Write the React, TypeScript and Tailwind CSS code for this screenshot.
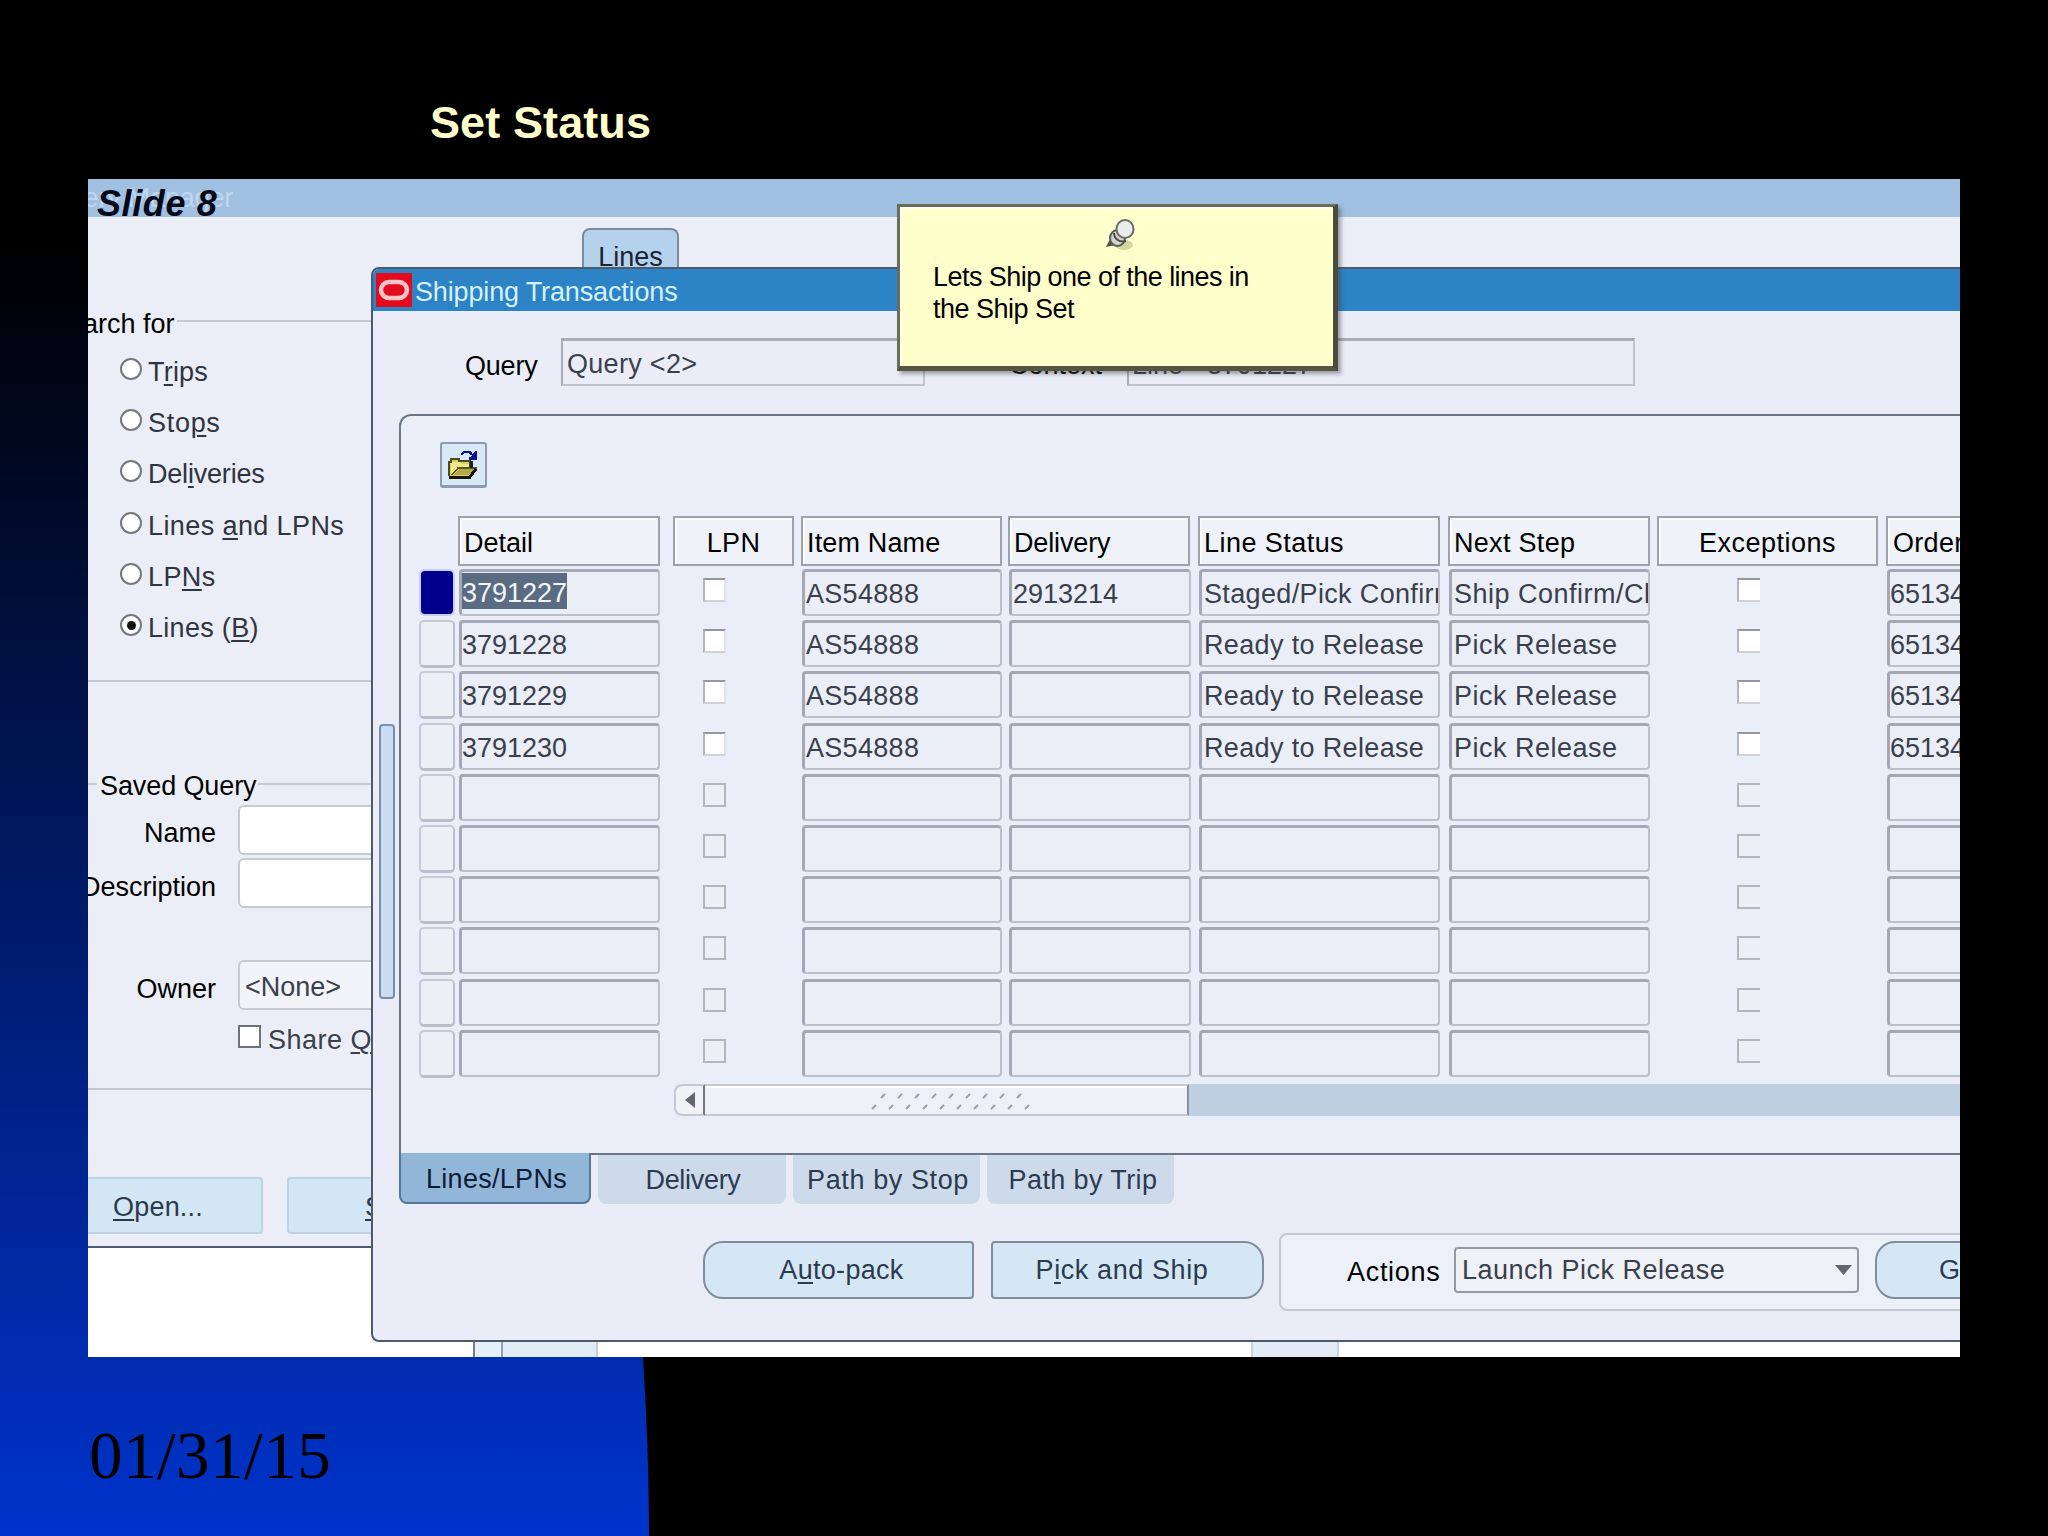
import React from 'react';
import clsx from 'clsx';

interface Column {
  title: string;
  // padding and right gap of the header box
  header: string;
  cell: string;
  kind: 'text' | 'lpn' | 'exception';
}

const columns: Column[] = [
  { title: 'Detail', header: 'mr-[13px] pl-[4px]', cell: 'ml-[1px] mr-[13px] pl-[0px]', kind: 'text' },
  { title: 'LPN', header: 'mr-[7px] justify-center tracking-[0.3px]', cell: '', kind: 'lpn' },
  { title: 'Item Name', header: 'mr-[6px] pl-[4px] tracking-[0.15px]', cell: 'ml-[1px] mr-[6px] pl-[1px] tracking-[0.3px]', kind: 'text' },
  { title: 'Delivery', header: 'mr-[8px] pl-[4px] tracking-[-0.15px]', cell: 'ml-[1px] mr-[7px] pl-[1px]', kind: 'text' },
  { title: 'Line Status', header: 'mr-[8px] pl-[4px] tracking-[0.45px]', cell: 'ml-[1px] mr-[8px] pl-[2px] tracking-[0.35px]', kind: 'text' },
  { title: 'Next Step', header: 'mr-[7px] pl-[4px] tracking-[0.3px]', cell: 'ml-[1px] mr-[7px] pl-[2px] tracking-[0.5px]', kind: 'text' },
  { title: 'Exceptions', header: 'mr-[8px] justify-center tracking-[0.5px]', cell: '', kind: 'exception' },
  { title: 'Order', header: 'pl-[5px] tracking-[0.3px]', cell: 'ml-[1px] pl-[0px]', kind: 'text' },
];

const lines: string[][] = [
  ['3791227', '', 'AS54888', '2913214', 'Staged/Pick Confirmed', 'Ship Confirm/Cl', '', '65134'],
  ['3791228', '', 'AS54888', '', 'Ready to Release', 'Pick Release', '', '65134'],
  ['3791229', '', 'AS54888', '', 'Ready to Release', 'Pick Release', '', '65134'],
  ['3791230', '', 'AS54888', '', 'Ready to Release', 'Pick Release', '', '65134'],
  [], [], [], [], [], [],
];

const grid = 'grid grid-cols-[39px_215px_128px_207px_190px_250px_209px_229px_150px]';

// Label with a mnemonic: "T_rips" underlines the r
const Mnemonic: React.FC<{ text: string }> = ({ text }) => {
  const [before, rest] = text.split('_');
  return (
    <span>
      {before}
      <span className="underline decoration-2 underline-offset-[3px]">{rest[0]}</span>
      {rest.slice(1)}
    </span>
  );
};

const OracleIcon = () => (
  <svg width="36" height="34" viewBox="0 0 36 34">
    <rect width="36" height="34" fill="#e20a1c" />
    <rect x="5" y="9" width="26" height="16" rx="8" fill="none" stroke="#ffc4c8" strokeWidth="4.500" />
  </svg>
);

const FolderIcon = () => (
  <svg width="30" height="30" viewBox="0 0 30 30" shapeRendering="crispEdges">
    <path d="M1 12h2v-3h8v2h11v6h6v2l-5 8H1z" fill="#d8cf6a" />
    <path d="M3 12h8l2 2h8v3H11l-8 7z" fill="#efe98c" />
    <path d="M6 24l5-5h15l-4 6H6z" fill="#b5a94c" />
    <path d="M1 26V12h2V9h8v2h11v6" fill="none" stroke="#4c4a1c" strokeWidth="2" />
    <path d="M4 25l6-7h18l-5 8" fill="none" stroke="#5c5822" strokeWidth="1.500" />
    <path d="M1 27h21l6-8" fill="none" stroke="#16160a" strokeWidth="3" />
    <path d="M23 11v7" stroke="#1d1d30" strokeWidth="3" />
    <path d="M13 5l3-3h6l2 3" fill="none" stroke="#0b0b8c" strokeWidth="2.500" />
    <path d="M29 1v9h-8V7l3-1 3-5z" fill="#0b0b9c" />
  </svg>
);

const PinIcon = () => (
  <svg width="30" height="33" viewBox="0 0 30 33">
    <ellipse cx="18" cy="26" rx="9" ry="5" fill="#d6d69c" />
    <path d="M0 28l4-8 6 6z" fill="#55553c" />
    <ellipse cx="11.500" cy="19" rx="7.500" ry="8" fill="#d2d2ce" stroke="#5a5a56" strokeWidth="2" />
    <path d="M8 14c0 6 6 10 12 8" fill="none" stroke="#4b4b48" strokeWidth="2" />
    <ellipse cx="19" cy="10" rx="8.500" ry="9" fill="#ececec" stroke="#6a6a67" strokeWidth="2" />
  </svg>
);

const Radio: React.FC<{ label: string; checked?: boolean; className?: string }> = ({ label, checked, className }) => (
  <div className="flex h-[51.200px] items-center pl-8 text-[#30343f]">
    <span className="mb-[5px] mr-[6px] flex h-[22px] w-[22px] items-center justify-center rounded-full border-2 border-[#74777c] bg-white">
      {checked && <span className="h-[9px] w-[9px] rounded-full bg-[#111]" />}
    </span>
    <span className={clsx('pt-[1px]', className)}>
      <Mnemonic text={label} />
    </span>
  </div>
);

const FieldLabel: React.FC<{ children: React.ReactNode; className?: string }> = ({ children, className }) => (
  <span className={clsx('mr-[22px] flex w-[128px] shrink-0 justify-end', className)}>{children}</span>
);

const ManagerWindow = () => (
  <div className="flex h-[1069px] flex-col border-b-2 border-[#4d5a6b] bg-[#ebeef7]">
    <div className="relative h-[38px] shrink-0 bg-[#9fc0e0]">
      <span className="absolute -left-10 top-0 leading-[38px] tracking-[-0.2px] text-[#bfd8ee]">Query Manager</span>
      <span className="absolute left-[9px] top-[4px] text-[36px] font-bold italic leading-[42px] tracking-[0.6px] text-[#040818]">Slide 8</span>
    </div>
    <div className="ml-[494px] mt-[11px] flex h-[40px] w-[97px] shrink-0 items-start justify-center rounded-t-lg border-2 border-b-0 border-[#7c8b9c] bg-[#b5d2ec] pt-[11px] text-[#1b2434]">
      Lines
    </div>

    <div className="flex w-[300px] flex-col">
      <div className="mt-10 flex h-8 items-center">
        <span className="-ml-[38px]">Search for</span>
        <span className="-mt-[7px] ml-[2px] h-[2px] flex-1 bg-[#c3c8d4]" />
      </div>
      <div className="mt-[6px]">
        <Radio label="T_rips" className="tracking-[0.2px]" />
        <Radio label="Sto_ps" className="tracking-[0.7px]" />
        <Radio label="Del_iveries" className="tracking-[-0.2px]" />
        <Radio label="Lines _and LPNs" className="tracking-[0.4px]" />
        <Radio label="LP_Ns" className="tracking-[0.4px]" />
        <Radio label="Lines (_B)" checked className="tracking-[0.3px]" />
      </div>
      <div className="mt-[27px] h-[2px] bg-[#c0c8d4]" />

      <div className="mt-[88px] flex h-8 items-center">
        <span className="mr-[3px] -mt-[5px] h-[2px] w-[9px] bg-[#c3c8d4]" />
        <span className="tracking-[-0.1px]">Saved Query</span>
        <span className="-mt-[5px] ml-[2px] h-[2px] flex-1 bg-[#c3c8d4]" />
      </div>
      <div className="mt-[3px] flex h-[50px] items-center">
        <FieldLabel className="pt-[6px]">Name</FieldLabel>
        <div className="h-full flex-1 rounded-l-md border-2 border-[#c6cad2] bg-white" />
      </div>
      <div className="mt-[3px] flex h-[50px] items-center">
        <FieldLabel className="pt-[7px]">Description</FieldLabel>
        <div className="h-full flex-1 rounded-l-md border-2 border-[#c6cad2] bg-white" />
      </div>
      <div className="mt-[52px] flex h-[50px] items-center">
        <FieldLabel className="pt-[7px]">Owner</FieldLabel>
        <div className="flex h-full flex-1 items-center rounded-l-md border-2 border-[#c6cad2] bg-[#f2f4fa] pl-[5px] pt-[3px] text-[#3a3f4c]">
          &lt;None&gt;
        </div>
      </div>
      <div className="ml-[150px] mt-[14px] flex h-6 items-center whitespace-nowrap">
        <span className="h-[23px] w-[23px] shrink-0 border-2 border-[#6f7278] bg-white" />
        <span className="ml-[7px] mt-[7px] tracking-[0.5px] text-[#3a3f4c]">
          <Mnemonic text="Share _Q" />
        </span>
      </div>
      <div className="mt-[40px] h-[2px] bg-[#c0c8d4]" />
      <div className="mt-[87px] flex h-[57px]">
        <div className="flex w-[175px] shrink-0 items-center rounded-r border-2 border-l-0 border-[#bdd2e2] bg-[#d3e6f4] pl-[25px] pt-[2px] tracking-[0.2px] text-[#2c3a4c]">
          <Mnemonic text="_Open..." />
        </div>
        <div className="ml-[24px] flex w-[170px] shrink-0 items-center rounded-l border-2 border-[#bdd2e2] bg-[#d3e6f4] pl-[76px] pt-[2px] text-[#2c3a4c]">
          <Mnemonic text="_Save" />
        </div>
      </div>
    </div>
  </div>
);

const CheckCell: React.FC<{ filled: boolean; open?: boolean }> = ({ filled, open }) => (
  <div className={clsx('pt-[9px]', open ? 'pl-[80px]' : 'pl-[30px]')}>
    <span
      className={clsx(
        'block h-[24px] w-[23px] border-2 border-[#b3b6bf]',
        open && 'border-r-0',
        filled ? 'border-b-[#cfd2d8] border-r-[#dfe2e8] border-t-[#94979f] bg-white' : 'bg-[#edeff7]',
      )}
    />
  </div>
);

const LinesTable = () => (
  <div className="ml-[18px] mt-7 w-[1620px]">
    <div className={clsx(grid, 'h-[50px]')}>
      <span />
      {columns.map((col) => (
        <div
          key={col.title}
          className={clsx('flex items-center border-2 border-[#9ea2ab] bg-[#eff2f9] pt-[4px] text-black shadow-[inset_2px_2px_0_#fbfcff]', col.header)}
        >
          {col.title}
        </div>
      ))}
    </div>
    <div className="mt-[3px]">
      {lines.map((line, i) => (
        <div key={i} className={clsx(grid, 'h-[51.200px]')}>
          {i === 0 ? (
            <div className="ml-[2px] mt-[2px] h-[43px] w-[32px] rounded-[4px] bg-[#00008c] shadow-[0_0_0_2px_#c9ccf5]" />
          ) : (
            <div className="h-[48px] w-[36px] rounded-[5px] border-2 border-[#c6cad4] border-b-[3px] border-b-[#b9becb] border-r-[#b9becb] bg-[#ebeff6]" />
          )}
          {columns.map((col, c) =>
            col.kind === 'text' ? (
              <div
                key={col.title}
                className={clsx(
                  'h-[47px] overflow-hidden whitespace-nowrap rounded-[4px] border-2 border-[#bcc0cb] border-l-[3px] border-l-[#a4a8b4] border-t-[3px] border-t-[#a4a8b4] bg-[#e9eef7] leading-[44px] text-[#3a3f4c]',
                  col.cell,
                )}
              >
                {i === 0 && c === 0 ? (
                  <span className="mt-[1px] inline-block h-9 bg-[#5a6b82] align-top leading-[41px] text-[#f0f5fc]">{line[c]}</span>
                ) : (
                  line[c]
                )}
              </div>
            ) : (
              <CheckCell key={col.title} filled={line.length > 0} open={col.kind === 'exception'} />
            ),
          )}
        </div>
      ))}
    </div>
  </div>
);

const HorizontalScroll = () => (
  <div className="ml-[273px] mt-[3px] flex h-8">
    <div className="flex w-[31px] items-center justify-end rounded-l-lg border-2 border-[#c5c8d2] border-r-[#73777f] bg-[#f0f2f8] pr-[8px]">
      <svg width="10" height="16" viewBox="0 0 10 16">
        <path d="M10 0v16L0 8z" fill="#62666f" />
      </svg>
    </div>
    <div className="w-[484px] border-y-2 border-r-2 border-[#c5c8d2] border-r-[#8b919c] bg-[#eef0f8] shadow-[inset_0_2px_0_#fff]">
      <svg width="480" height="28" viewBox="0 0 480 28">
        {Array.from({ length: 9 }, (_, i) => (
          <path key={i} d={`M${176 + i * 17} 12l4-4`} stroke="#9a9eaa" strokeWidth="2" />
        ))}
        {Array.from({ length: 10 }, (_, i) => (
          <path key={i} d={`M${167 + i * 17} 23l4-4`} stroke="#9a9eaa" strokeWidth="2" />
        ))}
      </svg>
    </div>
    <div className="flex-1 bg-[#c0d0e3]" />
  </div>
);

const ShippingWindow = () => (
  <div className="absolute left-[283px] top-[88px] h-[1075px] w-[1700px] rounded-l-lg border-2 border-[#4d5a6b] bg-[#eaedf7]">
    <div className="flex h-[42px] items-center rounded-tl-md bg-[#2c83c6] pl-[3px] tracking-[-0.15px] text-[#d5f1fd]">
      <OracleIcon />
      <span className="ml-[3px] pt-[3px]">Shipping Transactions</span>
    </div>

    <div className="mt-[27px] flex h-[48px] items-center pl-[92px] text-black">
      <span className="w-[96px] pt-[8px] tracking-[-0.2px]">Query</span>
      <div className="flex h-full w-[364px] items-center border-2 border-t-[3px] border-[#c0c2ce] border-l-[#a9acb8] border-t-[#a9acb8] pl-[4px] pt-[2px] tracking-[0.3px] text-[#3a3f4c]">
        Query &lt;2&gt;
      </div>
      <span className="ml-[84px] w-[118px] pt-[6px]">Context</span>
      <div className="flex h-full w-[508px] items-center border-2 border-t-[3px] border-[#c0c2ce] border-l-[#a9acb8] border-t-[#a9acb8] pl-[3px] pt-[5px] text-[#3a3f4c]">
        Line - 3791227
      </div>
    </div>

    <div className="mt-[28px] flex h-[741px]">
      <div className="w-[26px] shrink-0 pl-[6px] pt-[310px]">
        <div className="h-[275px] w-[16px] rounded-[4px] border-2 border-[#7b8ea8] bg-[#c9dcf3]" />
      </div>
      <div className="flex-1 rounded-tl-[12px] border-2 border-r-0 border-[#6d7686] bg-[#e9eef8]">
        <div className="ml-[39px] mt-[26px] flex h-[46px] w-[47px] items-center justify-center rounded-[3px] border-2 border-b-[3px] border-[#8d9bb0] bg-[#d7e8f6] pr-[2px]">
          <FolderIcon />
        </div>
        <LinesTable />
        <HorizontalScroll />
      </div>
    </div>

    <div className="flex h-[49px] gap-[7px] pl-[26px] text-[#2c3a50]">
      <div className="-mt-[2px] flex h-[51px] w-[192px] items-center justify-center rounded-b-lg border-2 border-t-0 border-[#56779a] bg-[#91b6d8] pl-[3px] pt-[2px] tracking-[0.3px] text-[#0f1c38]">
        Lines/LPNs
      </div>
      <div className="flex w-[188px] items-center justify-center rounded-b-lg bg-[#cddaea] pl-[2px] tracking-[-0.3px]">Delivery</div>
      <div className="flex w-[187px] items-center justify-center rounded-b-lg bg-[#cddaea] pl-[3px] tracking-[0.6px]">Path by Stop</div>
      <div className="flex w-[187px] items-center justify-center rounded-b-lg bg-[#cddaea] pl-[5px] tracking-[0.4px]">Path by Trip</div>
    </div>

    <div className="mt-[29px] flex h-[78px] pl-[330px] text-[#2c3a50]">
      <div className="mt-[8px] flex h-[58px] w-[271px] items-center justify-center rounded-l-[20px] rounded-r-[4px] border-2 border-[#7f8e9e] bg-[#d5e7f4] pl-[6px] tracking-[0.3px]">
        <Mnemonic text="A_uto-pack" />
      </div>
      <div className="ml-[17px] mt-[8px] flex h-[58px] w-[273px] items-center justify-center rounded-l-[4px] rounded-r-[20px] border-2 border-[#7f8e9e] bg-[#d5e7f4] pr-[11px] tracking-[0.6px]">
        <Mnemonic text="P_ick and Ship" />
      </div>
      <div className="ml-[15px] flex flex-1 items-start rounded-l-lg border-2 border-[#c3c7d2] bg-[#ecf0f8]">
        <span className="ml-[66px] mt-[21px] w-[107px] tracking-[0.7px] text-black">Actions</span>
        <div className="mt-[12px] flex h-[46px] w-[405px] items-center justify-between rounded-[4px] border-2 border-[#94989f] bg-[#eef1f5] pl-[6px] pr-[5px] tracking-[0.5px] text-[#3a3f4c]">
          Launch Pick Release
          <svg width="17" height="10" viewBox="0 0 17 10">
            <path d="M0 0h17L8.500 10z" fill="#62666f" />
          </svg>
        </div>
        <div className="ml-[16px] mt-[6px] flex h-[58px] w-[150px] items-center rounded-l-[20px] border-2 border-[#7f8e9e] bg-[#d5e7f4] pl-[62px]">Go</div>
      </div>
    </div>
  </div>
);

const StickyNote = () => (
  <div className="absolute left-[809px] top-[25px] h-[167px] w-[441px] border-b-[5px] border-l-[3px] border-r-[5px] border-t-[3px] border-[#6c6d58] border-b-[#55563f] border-r-[#4a4b3a] bg-[#ffffcc] text-black shadow-[3px_3px_4px_rgba(60,60,70,0.45),inset_2px_2px_0_#fffff0]">
    <div className="ml-[206px] mt-[12px] h-[33px]">
      <PinIcon />
    </div>
    <p className="ml-[33px] mt-[9px] leading-8 tracking-[-0.55px]">
      Lets Ship one of the lines in
      <br />
      <span className="tracking-[-0.5px]">the Ship Set</span>
    </p>
  </div>
);

export default function App() {
  return (
    <div className="relative h-[1536px] w-[2048px] overflow-hidden bg-black font-['Liberation_Sans',Arial,sans-serif] text-[27px] leading-8 text-black">
      <svg className="absolute left-0 top-0" width="700" height="1536" viewBox="0 0 700 1536">
        <defs>
          <linearGradient id="glow" gradientUnits="userSpaceOnUse" x1="0" y1="0" x2="0" y2="1536">
            <stop offset="0" stopColor="#000000" />
            <stop offset="0.16" stopColor="#000000" />
            <stop offset="1" stopColor="#0033cc" />
          </linearGradient>
        </defs>
        <path d="M0 0H200C480 500 640 1000 643 1357Q649 1450 649 1536H0Z" fill="url(#glow)" />
      </svg>

      <div className="relative flex h-full flex-col">
        <h1 className="ml-[430px] mt-[97px] text-[45px] font-bold leading-[52px] tracking-[0.1px] text-[#ffffcc]">Set Status</h1>
        <div className="relative ml-[88px] mt-[30px] h-[1178px] w-[1872px] shrink-0 overflow-hidden bg-white">
          <ManagerWindow />
          {/* windows peeking out below the form */}
          <div className="ml-[385px] flex h-[109px]">
            <div className="w-[28px] border-l-2 border-[#6f7f90] bg-[#e6eff8]" />
            <div className="w-[97px] border-x-2 border-[#8fa0b2] border-r-[#c5d0dc] bg-[#e3ecf5]" />
            <div className="ml-[653px] w-[88px] border-x-2 border-[#c9d4e0] bg-[#e3ebf5]" />
          </div>
          <ShippingWindow />
          <StickyNote />
        </div>
        <p className="ml-[89px] mt-[60px] font-['Liberation_Serif','Times_New_Roman',serif] text-[67px] leading-[76px] tracking-[0.5px]">01/31/15</p>
      </div>
    </div>
  );
}
